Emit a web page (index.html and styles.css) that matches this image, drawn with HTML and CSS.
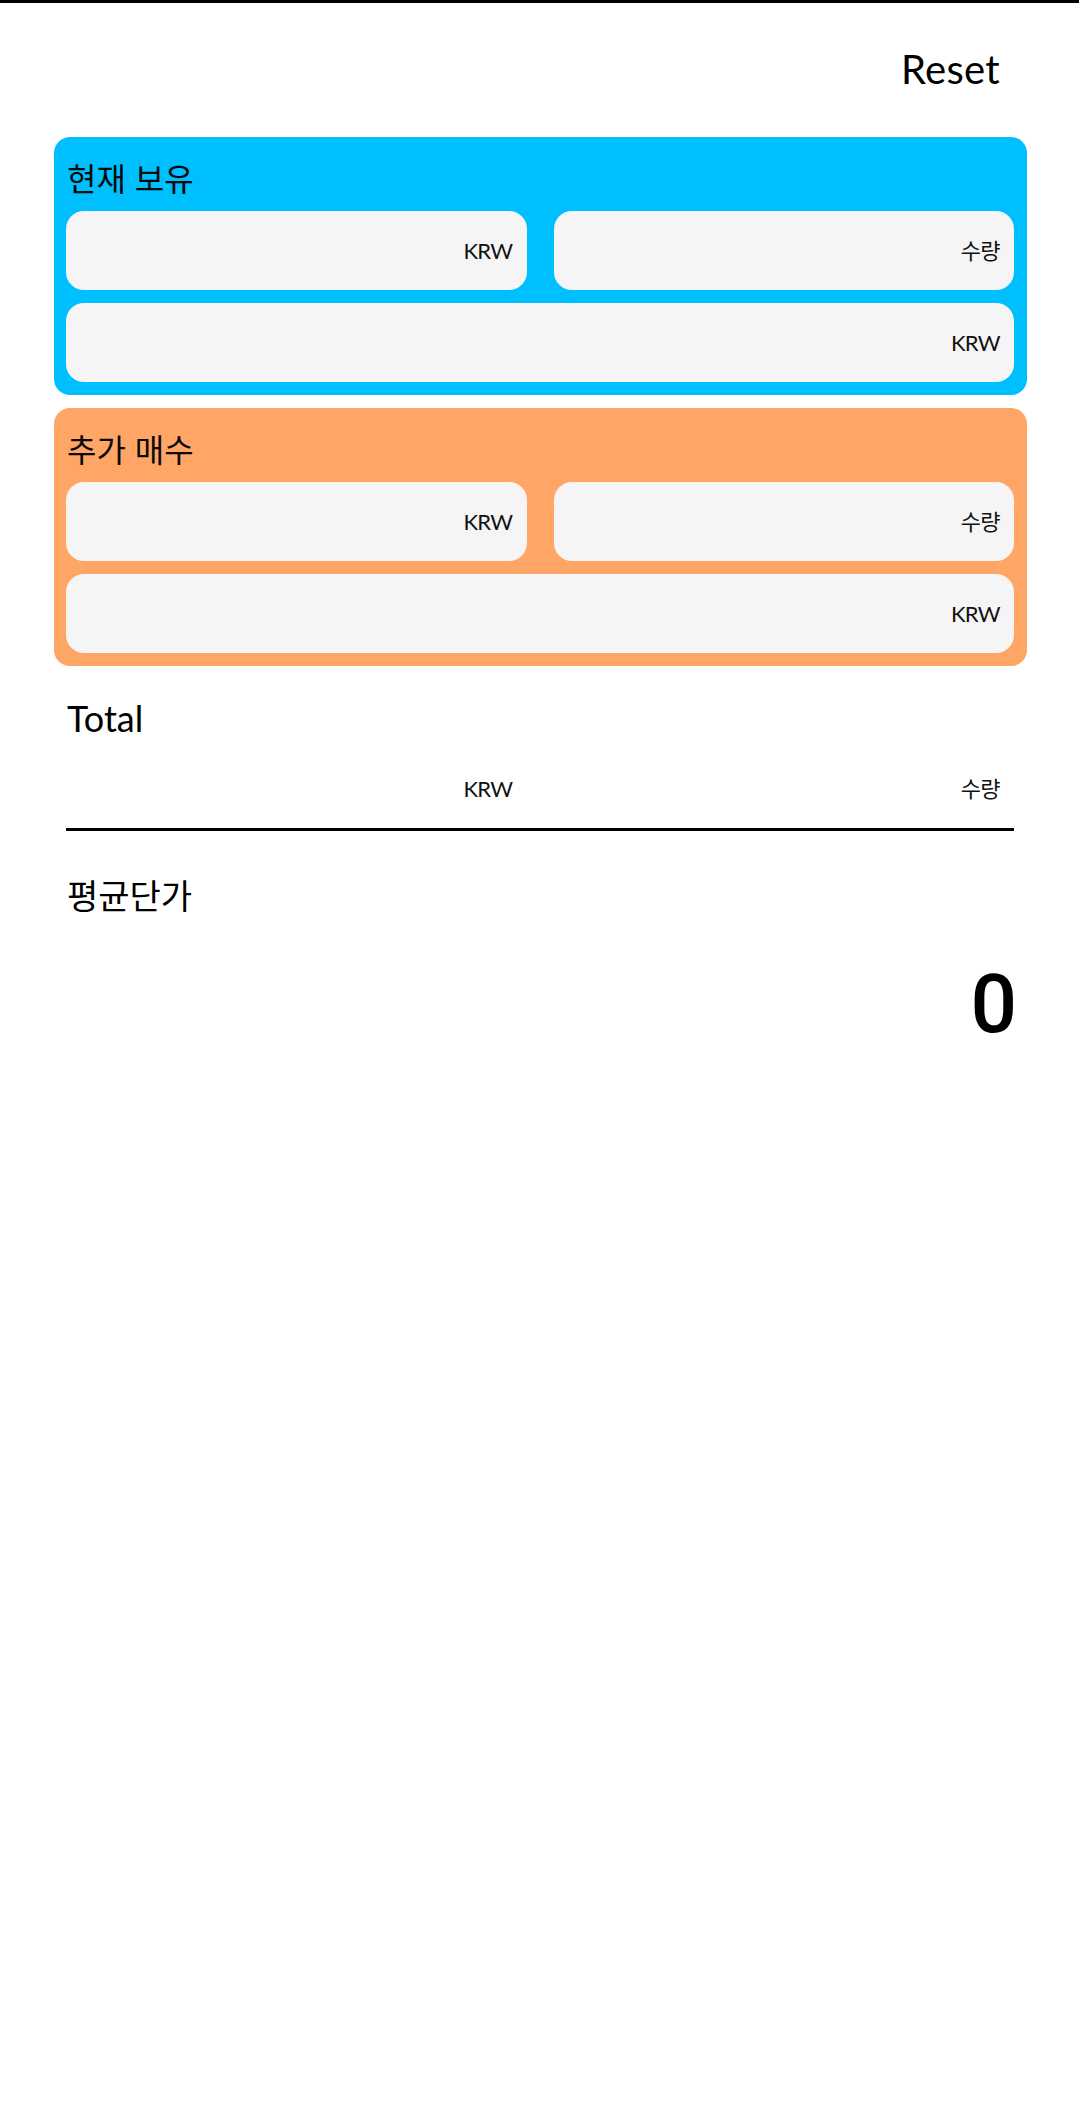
FILE: index.html
```html
<!DOCTYPE html>
<html lang="ko">
<head>
<meta charset="utf-8">
<title>평균단가 계산기</title>
<link rel="stylesheet" href="styles.css">
</head>
<body>
<div class="app">
  <header class="topbar">
    <span class="reset">Reset</span>
  </header>

  <section class="card card-blue">
    <h2 class="card-title">현재 보유</h2>
    <div class="fields">
      <div class="field"><span class="unit">KRW</span></div>
      <div class="field"><span class="unit">수량</span></div>
      <div class="field wide"><span class="unit">KRW</span></div>
    </div>
  </section>

  <section class="card card-orange">
    <h2 class="card-title">추가 매수</h2>
    <div class="fields">
      <div class="field"><span class="unit">KRW</span></div>
      <div class="field"><span class="unit">수량</span></div>
      <div class="field wide"><span class="unit">KRW</span></div>
    </div>
  </section>

  <section class="total">
    <h2 class="total-title">Total</h2>
    <div class="total-row">
      <div class="total-cell"><span class="unit">KRW</span></div>
      <div class="total-cell"><span class="unit">수량</span></div>
    </div>
  </section>

  <section class="average">
    <h2 class="avg-title">평균단가</h2>
    <div class="avg-value">0</div>
  </section>
</div>
</body>
</html>
```

FILE: styles.css
```css
html, body {
  margin: 0;
  padding: 0;
  background: #ffffff;
}

body {
  font-family: "Lato", "Noto Sans CJK KR", sans-serif;
  color: #000000;
}

.app {
  border-top: 3px solid #000000;
  padding: 0 52px 40px 54px;
}

.topbar {
  display: flex;
  justify-content: flex-end;
  padding: 43px 27px 0 0;
  height: 91px;
}

.reset {
  font-family: "Lato", sans-serif;
  font-size: 40px;
  line-height: 47px;
  letter-spacing: 0.3px;
}

.card {
  border-radius: 16px;
  padding: 12px 13px 13px 12px;
}

.card + .card {
  margin-top: 13px;
}

.card-blue {
  background: #00bfff;
}

.card-orange {
  background: #ffa566;
}

.card-title {
  margin: 6px 0 12px 1px;
  font-family: "Noto Sans CJK KR", sans-serif;
  font-weight: 400;
  font-size: 32px;
  line-height: 44px;
  color: #0a0a0a;
}

.fields {
  display: grid;
  grid-template-columns: 1fr 1fr;
  column-gap: 27px;
  row-gap: 13px;
}

.field {
  height: 79px;
  border-radius: 18px;
  background: #f5f5f5;
  display: flex;
  align-items: center;
  justify-content: flex-end;
  padding-right: 14px;
}

.field.wide {
  grid-column: 1 / span 2;
}

.unit {
  font-family: "Lato", "Noto Sans CJK KR", sans-serif;
  font-size: 22px;
  line-height: 28px;
  letter-spacing: -0.6px;
  color: #111111;
}

.total {
  padding: 0 13px 0 12px;
  margin-top: 30px;
}

.total-title {
  margin: 0 0 0 1px;
  font-weight: 400;
  font-size: 36px;
  line-height: 44px;
}

.total-row {
  display: grid;
  grid-template-columns: 1fr 1fr;
  column-gap: 27px;
  margin-top: 9px;
  border-bottom: 3px solid #000000;
}

.total-cell {
  height: 79px;
  display: flex;
  align-items: center;
  justify-content: flex-end;
  padding-right: 14px;
}

.average {
  padding: 0 13px 0 12px;
}

.avg-title {
  margin: 40px 0 0 1px;
  font-family: "Noto Sans CJK KR", sans-serif;
  font-weight: 400;
  font-size: 34px;
  line-height: 48px;
}

.avg-value {
  margin: 35px -3px 0 0;
  text-align: right;
  font-family: "Roboto", sans-serif;
  font-size: 82px;
  line-height: 100px;
  font-weight: 500;
}
```
